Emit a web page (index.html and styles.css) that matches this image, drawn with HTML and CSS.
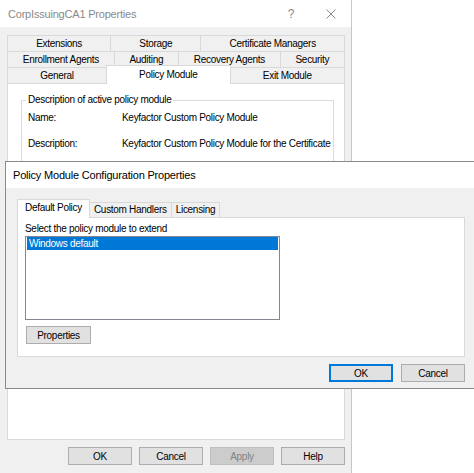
FILE: index.html
```html
<!DOCTYPE html>
<html lang="en">
  <head>
    <meta charset="UTF-8" />
    <meta name="viewport" content="width=device-width, initial-scale=1.0" />
    <title>CorpIssuingCA1 Properties</title>
    <link rel="stylesheet" href="styles.css">
  </head>
  <body>
    <div class="desktop">
      <!-- CA properties window (inactive, behind) -->
      <div class="window props">
        <div class="titlebar">
          <span class="title">CorpIssuingCA1 Properties</span>
          <span class="title-btn help">?</span>
          <span class="title-btn close">
            <svg width="10" height="10" viewBox="0 0 10 10">
              <path d="M0.5 0.5L9.5 9.5M9.5 0.5L0.5 9.5" stroke="#8a8a8a" stroke-width="1" fill="none" />
            </svg>
          </span>
        </div>
        <div class="window-body">
          <div class="tabs">
            <div class="tab-row">
              <div class="tab">Extensions</div>
              <div class="tab">Storage</div>
              <div class="tab">Certificate Managers</div>
            </div>
            <div class="tab-row">
              <div class="tab">Enrollment Agents</div>
              <div class="tab">Auditing</div>
              <div class="tab">Recovery Agents</div>
              <div class="tab">Security</div>
            </div>
            <div class="tab-row">
              <div class="tab">General</div>
              <div class="tab active">Policy Module</div>
              <div class="tab">Exit Module</div>
            </div>
          </div>
          <div class="tab-panel">
            <fieldset class="group">
              <legend>Description of active policy module</legend>
              <div class="info-grid">
                <span>Name:</span>
                <span>Keyfactor Custom Policy Module</span>
                <span>Description:</span>
                <span>Keyfactor Custom Policy Module for the Certificate</span>
              </div>
            </fieldset>
          </div>
          <div class="button-row">
            <button class="btn">OK</button>
            <button class="btn">Cancel</button>
            <button class="btn" disabled>Apply</button>
            <button class="btn">Help</button>
          </div>
        </div>
      </div>

      <!-- Policy module configuration window (active, on top) -->
      <div class="window config">
        <div class="titlebar">
          <span class="title">Policy Module Configuration Properties</span>
        </div>
        <div class="window-body">
          <div class="tab-row">
            <div class="tab active">Default Policy</div>
            <div class="tab">Custom Handlers</div>
            <div class="tab">Licensing</div>
          </div>
          <div class="tab-panel">
            <div class="field-label">Select the policy module to extend</div>
            <div class="listbox">
              <div class="list-item selected">Windows default</div>
            </div>
            <button class="btn props-btn">Properties</button>
          </div>
          <div class="button-row">
            <button class="btn default">OK</button>
            <button class="btn">Cancel</button>
          </div>
        </div>
      </div>
    </div>
  </body>
</html>
```

FILE: styles.css
```css
body {
  margin: 0;
  background: #fff;
  font-family: "Liberation Sans", Arial, sans-serif;
  font-size: 10px;
  letter-spacing: -0.3px;
  color: #000;
  overflow: hidden;
}
.desktop {
  position: relative;
  width: 474px;
  height: 473px;
  overflow: hidden;
}

/* windows */
.window {
  position: absolute;
  display: flex;
  flex-direction: column;
  background: #f0f0f0;
  box-sizing: border-box;
}
.props {
  left: 0;
  top: 0;
  width: 352px;
  height: 473px;
  border-right: 1px solid #c6c6c6;
}
.config {
  left: 5px;
  top: 161px;
  width: 471px;
  height: 228px;
  border: 1px solid #8a8a8a;
}
.titlebar {
  display: flex;
  align-items: center;
  background: #fff;
  font-size: 11px;
  letter-spacing: -0.2px;
  flex-shrink: 0;
}
.props .titlebar {
  height: 27px;
  padding-left: 8px;
  color: #8a8a8a;
}
.config .titlebar {
  height: 26px;
  padding-left: 7px;
}
.title-btn {
  width: 40px;
  height: 100%;
  display: flex;
  align-items: center;
  justify-content: center;
}
.help {
  margin-left: auto;
  font-size: 12px;
  color: #8a8a8a;
}
.props .window-body {
  flex: 1;
  padding: 8px 6px 0 7px;
}
.config .window-body {
  flex: 1;
  padding: 11px 10px 0 11px;
}

/* tabs */
.tab-row {
  display: flex;
  align-items: flex-end;
  height: 16px;
}
.tab {
  height: 16px;
  line-height: 15px;
  box-sizing: border-box;
  border: 1px solid #d9d9d9;
  border-bottom: 0;
  padding: 0 2px;
  text-align: center;
  white-space: nowrap;
  background: #f0f0f0;
}
.tab + .tab {
  margin-left: -1px;
}
.props .tab {
  flex: 1 1 auto;
}
.tab.active {
  height: 19px;
  line-height: 17px;
  margin-bottom: -1px;
  background: #fff;
  position: relative;
  z-index: 1;
}
.config .tab-row {
  height: 18px;
}
.config .tab {
  height: 15px;
  line-height: 14px;
  padding: 0 4px;
}
.config .tab.active {
  height: 19px;
  line-height: 16px;
  padding: 0 7px;
  text-align: left;
}

.tab-panel {
  background: #fff;
  border: 1px solid #d9d9d9;
  box-sizing: border-box;
}
.props .tab-panel {
  height: 357px;
}
.config .tab-panel {
  height: 140px;
  padding: 5px 7px 0;
}

/* group box */
.group {
  margin: 10px 10px 0 13px;
  padding: 6px 2px 110px 4px;
  border: 1px solid #dcdcdc;
  min-width: 0;
}
.group legend {
  padding: 0 2px;
  line-height: 12px;
}
.info-grid {
  display: grid;
  grid-template-columns: 94px 1fr;
  row-gap: 14px;
  padding-left: 2px;
  line-height: 12px;
  white-space: nowrap;
  overflow: hidden;
}

/* list */
.field-label {
  line-height: 12px;
}
.listbox {
  margin-top: 1px;
  width: 255px;
  height: 84px;
  border: 1px solid #828790;
  box-sizing: border-box;
  background: #fff;
}
.list-item {
  margin: 0 1px;
  padding-left: 2px;
  line-height: 13px;
}
.list-item.selected {
  background: #0078d7;
  color: #fff;
}

/* buttons */
.button-row {
  display: flex;
  justify-content: flex-end;
  gap: 7px;
  margin-top: 7px;
}
.config .button-row {
  gap: 8px;
}
.btn {
  width: 64px;
  height: 18px;
  padding: 0;
  border: 1px solid #adadad;
  background: #e1e1e1;
  font: inherit;
  letter-spacing: inherit;
  color: #000;
}
.btn:disabled {
  background: #cccccc;
  border-color: #bfbfbf;
  color: #838383;
}
.btn.default {
  border-color: #0078d7;
  box-shadow: inset 0 0 0 1px #0078d7;
}
.props-btn {
  display: block;
  width: 65px;
  margin: 6px 0 0 1px;
}
```
